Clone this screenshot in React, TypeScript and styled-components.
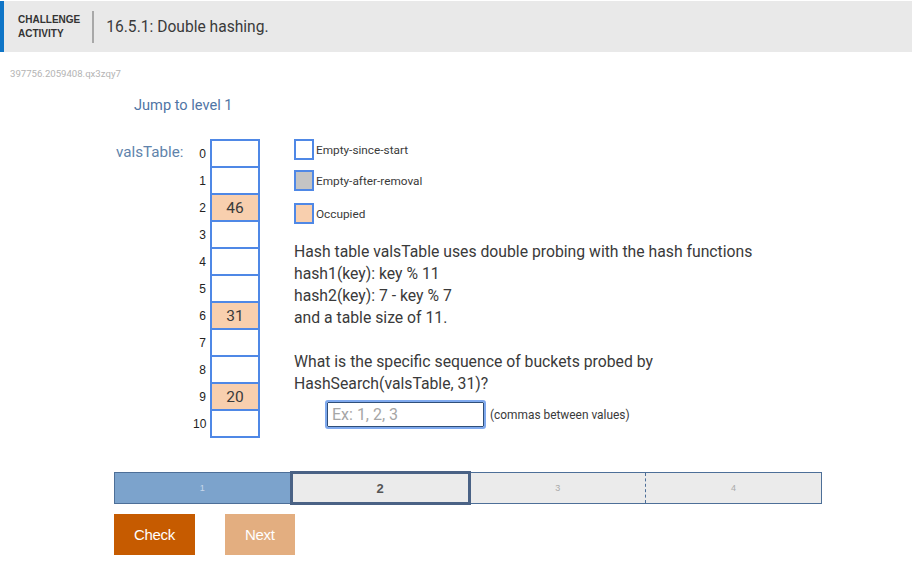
import React from "react";
import styled, { createGlobalStyle } from "styled-components";

const GlobalStyle = createGlobalStyle`
  html, body {
    margin: 0;
    padding: 0;
    background: #ffffff;
    font-family: Roboto, "Liberation Sans", Arial, sans-serif;
    color: #333333;
  }
`;

const Page = styled.div`
  width: 912px;
  padding-top: 1px;
`;

const Header = styled.div`
  display: flex;
  align-items: center;
  height: 51px;
  background: #e9e9e9;
  border-left: 4px solid #0f75c7;
`;

const Kind = styled.div`
  font-family: "Liberation Sans", Arial, sans-serif;
  font-size: 10px;
  font-weight: bold;
  line-height: 14px;
  color: #333;
  padding: 0 12px 0 14px;
`;

const Divider = styled.div`
  width: 2px;
  height: 32px;
  background: #a8a8a8;
`;

const Title = styled.h1`
  margin: 0 0 0 12px;
  font-size: 15.6px;
  font-weight: 400;
  color: #3a3a3a;
`;

const ActivityId = styled.div`
  margin: 16px 0 0 10px;
  font-size: 9.6px;
  color: #b4b4b4;
`;

const JumpLink = styled.a`
  display: block;
  margin: 17px 0 0 134px;
  font-size: 14.6px;
  color: #5075a5;
  text-decoration: none;
`;

const Body = styled.div`
  display: flex;
  margin: 25px 0 0 116px;
`;

const TableLabel = styled.div`
  width: 77px;
  padding-top: 4px;
  font-size: 15.2px;
  color: #6083ab;
`;

const Rows = styled.div`
  display: flex;
  flex-direction: column;
`;

const Row = styled.div`
  display: flex;
  align-items: center;
  margin-top: -2px;
  &:first-child {
    margin-top: 0;
  }
`;

const Index = styled.span`
  width: 13px;
  margin-right: 4px;
  text-align: right;
  font-family: "Liberation Sans", Arial, sans-serif;
  font-size: 12px;
  color: #222;
`;

const Cell = styled.div<{ $fill: string }>`
  box-sizing: border-box;
  width: 50px;
  height: 29px;
  border: 2px solid #4f88e6;
  background: ${(p) => p.$fill};
  display: flex;
  align-items: center;
  justify-content: center;
  font-size: 15.5px;
  color: #3a3a3a;
`;

const Side = styled.div`
  margin-left: 34px;
  display: flex;
  flex-direction: column;
`;

const Legend = styled.div`
  display: flex;
  flex-direction: column;
  gap: 10px;
`;

const LegendItem = styled.div`
  display: flex;
  align-items: center;
  font-size: 11.8px;
  color: #3a3a3a;
  &:nth-child(3) {
    margin-top: 2px;
  }
`;

const Swatch = styled.span<{ $fill: string }>`
  box-sizing: border-box;
  width: 20px;
  height: 21px;
  margin-right: 2px;
  border: 2px solid #4f88e6;
  background: ${(p) => p.$fill};
`;

const Prompt = styled.div`
  margin-top: 17px;
  font-size: 15.75px;
  line-height: 22px;
  color: #3a3a3a;
  p {
    margin: 0;
  }
  p + p {
    margin-top: 22px;
  }
`;

const AnswerRow = styled.div`
  display: flex;
  align-items: center;
  margin: 7px 0 0 33px;
`;

const AnswerInput = styled.input`
  box-sizing: border-box;
  width: 157px;
  height: 25px;
  padding: 0 4px;
  border: 1px solid #2f4f7a;
  outline: 2px solid #7fa9ee;
  outline-offset: 0;
  border-radius: 1px;
  font-family: Roboto, "Liberation Sans", Arial, sans-serif;
  font-size: 16px;
  color: #333;
  &::placeholder {
    color: #a6a6a6;
  }
`;

const Hint = styled.span`
  margin-left: 6px;
  font-size: 11.9px;
  color: #3a3a3a;
`;

const Levels = styled.div`
  display: flex;
  box-sizing: border-box;
  width: 708px;
  height: 32px;
  margin: 34px 0 0 114px;
  border: 1px solid #4d6f98;
  background: #ebebeb;
`;

const Level = styled.div<{ $state: "done" | "current" | "todo"; $dashed?: boolean }>`
  flex: 1;
  display: flex;
  align-items: center;
  justify-content: center;
  box-sizing: border-box;
  font-family: "Liberation Sans", Arial, sans-serif;
  font-size: ${(p) => (p.$state === "current" ? "13px" : "9px")};
  font-weight: ${(p) => (p.$state === "current" ? "bold" : "normal")};
  color: ${(p) =>
    p.$state === "done" ? "#c8d8ea" : p.$state === "current" ? "#555" : "#aaa"};
  background: ${(p) => (p.$state === "done" ? "#7ca3cc" : "#ebebeb")};
  border: ${(p) => (p.$state === "current" ? "3px solid #4a6285" : "none")};
  margin: ${(p) => (p.$state === "current" ? "-2px 0" : "0")};
  border-right: ${(p) => (p.$dashed ? "1px dashed #4d6f98" : undefined)};
`;

const Buttons = styled.div`
  display: flex;
  gap: 30px;
  margin: 10px 0 0 114px;
`;

const Button = styled.button<{ $muted?: boolean }>`
  height: 41px;
  padding: 0 20px;
  border: none;
  border-radius: 0;
  background: ${(p) => (p.$muted ? "#e3ae80" : "#c65b00")};
  color: #fff;
  font-family: "Liberation Sans", Arial, sans-serif;
  font-size: 15px;
  letter-spacing: -0.3px;
`;

const table: (number | null)[] = [null, null, 46, null, null, null, 31, null, null, 20, null];

export default function App() {
  return (
    <Page>
      <GlobalStyle />
      <Header>
        <Kind>
          CHALLENGE
          <br />
          ACTIVITY
        </Kind>
        <Divider />
        <Title>16.5.1: Double hashing.</Title>
      </Header>
      <ActivityId>397756.2059408.qx3zqy7</ActivityId>
      <JumpLink href="#">Jump to level 1</JumpLink>
      <Body>
        <TableLabel>valsTable:</TableLabel>
        <Rows>
          {table.map((v, i) => (
            <Row key={i}>
              <Index>{i}</Index>
              <Cell $fill={v === null ? "#ffffff" : "#f8cfae"}>{v}</Cell>
            </Row>
          ))}
        </Rows>
        <Side>
          <Legend>
            <LegendItem>
              <Swatch $fill="#ffffff" />
              Empty-since-start
            </LegendItem>
            <LegendItem>
              <Swatch $fill="#c4c4c4" />
              Empty-after-removal
            </LegendItem>
            <LegendItem>
              <Swatch $fill="#f8cfae" />
              Occupied
            </LegendItem>
          </Legend>
          <Prompt>
            <p>
              Hash table valsTable uses double probing with the hash functions
              <br />
              hash1(key): key % 11
              <br />
              hash2(key): 7 - key % 7
              <br />
              and a table size of 11.
            </p>
            <p>
              What is the specific sequence of buckets probed by
              <br />
              HashSearch(valsTable, 31)?
            </p>
          </Prompt>
          <AnswerRow>
            <AnswerInput placeholder="Ex: 1, 2, 3" />
            <Hint>(commas between values)</Hint>
          </AnswerRow>
        </Side>
      </Body>
      <Levels>
        <Level $state="done">1</Level>
        <Level $state="current">2</Level>
        <Level $state="todo" $dashed>
          3
        </Level>
        <Level $state="todo">4</Level>
      </Levels>
      <Buttons>
        <Button>Check</Button>
        <Button $muted>Next</Button>
      </Buttons>
    </Page>
  );
}
